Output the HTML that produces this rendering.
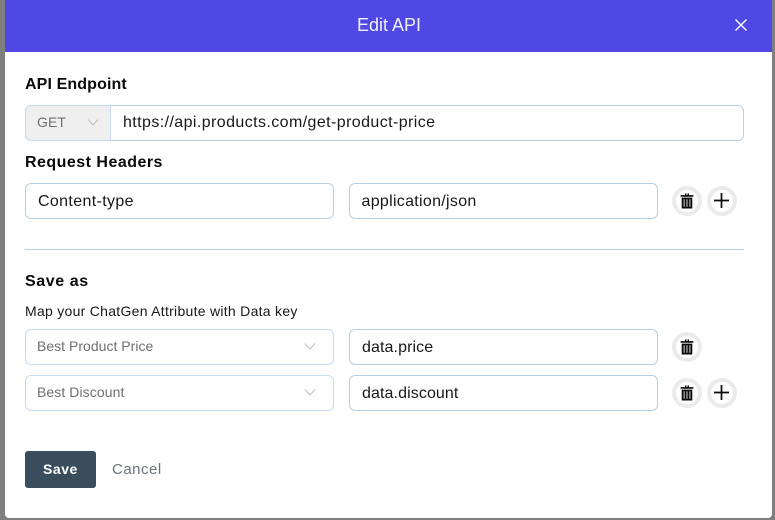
<!DOCTYPE html>
<html><head><meta charset="utf-8"><title>Edit API</title>
<style>
html,body{margin:0;padding:0;width:775px;height:520px;overflow:hidden;background:#7f7f7f}
body{position:relative;font-family:"Liberation Sans",sans-serif;color:#111}
.modal{position:absolute;left:5px;top:0;width:767px;height:518px;background:#fff;border-radius:0 0 4px 4px}
.hd{position:absolute;left:5px;top:0;width:767px;height:52px;background:#5048e5}
.t{position:absolute;white-space:nowrap;line-height:20px}
.b{font-weight:700;font-size:16px;color:#0a0a0a}
.box{position:absolute;box-sizing:border-box;height:36px;background:#fff;border:1px solid #b8d0e4;border-radius:6px}
.sel{border-color:#c9daf3}
.val{font-size:16px;color:#16181c}
.ph{font-size:14px;color:#6f6f6f}
.ic{position:absolute}
.circ{position:absolute;width:30px;height:30px;box-sizing:border-box;border:4px solid #ebebeb;border-radius:50%;background:#fff}
</style></head><body>
<div class="modal"></div>
<div class="hd"></div>
<div class="t" style="left:357px;top:15px;font-size:18px;color:#f2f1ff">Edit API</div>
<svg class="ic" style="left:735px;top:19px" width="12" height="12" viewBox="0 0 12 12"><path d="M.5 .5L11.500 11.500M11.500 .5L.5 11.500" stroke="#fff" stroke-width="1.400" fill="none"/></svg>

<div class="t b" style="left:25px;top:75px;letter-spacing:.12px">API Endpoint</div>
<div class="box" style="left:25px;top:105px;width:719px"></div>
<div style="position:absolute;left:25px;top:105px;width:86px;height:36px;box-sizing:border-box;background:#efefef;border:1px solid #c9daf3;border-radius:6px 0 0 6px"></div>
<div class="t ph" style="left:37px;top:112px;letter-spacing:.1px">GET</div>
<svg class="ic" style="left:87px;top:118px" width="12" height="9" viewBox="0 0 12 9"><path d="M1 1.500L6 7L11 1.500" stroke="#c4c4c4" stroke-width="1.100" fill="none"/></svg>
<div class="t val" style="left:123px;top:113px;letter-spacing:.41px">https://api.products.com/get-product-price</div>

<div class="t b" style="left:25px;top:153px;letter-spacing:.48px">Request Headers</div>
<div class="box" style="left:25px;top:183px;width:309px"></div>
<div class="t val" style="left:38px;top:192px;letter-spacing:.36px">Content-type</div>
<div class="box" style="left:349px;top:183px;width:309px"></div>
<div class="t val" style="left:361.500px;top:192px;letter-spacing:.3px">application/json</div>

<div class="circ" style="left:672px;top:186px"></div>
<svg class="ic" style="left:680px;top:193px" width="14" height="16" viewBox="0 0 14 16"><path d="M5 .5h4v1.600h4.400v1.600H.6V2.100H5zM1.700 4.600h10.600v10.900H1.700z" fill="#0a0a0a"/><path d="M4.100 6.300v7.500M7 6.300v7.500M9.900 6.300v7.500" stroke="#d8d8d8" stroke-width="1" fill="none"/><path d="M6 1.200h2" stroke="#fff" stroke-width=".8"/></svg>
<div class="circ" style="left:707px;top:186px"></div>
<svg class="ic" style="left:714px;top:193px" width="15" height="15" viewBox="0 0 15 15"><path d="M7.500 0v15M0 7.500h15" stroke="#0a0a0a" stroke-width="1.700" fill="none"/></svg>

<div style="position:absolute;left:25px;top:249px;width:719px;height:1px;background:#b8d0e4"></div>

<div class="t b" style="left:25px;top:272px;letter-spacing:.58px">Save as</div>
<div class="t" style="left:25px;top:301px;font-size:14px;color:#16181c;letter-spacing:.28px">Map your ChatGen Attribute with Data key</div>

<div class="box sel" style="left:25px;top:329px;width:309px"></div>
<div class="t ph" style="left:37px;top:336px;letter-spacing:.02px">Best Product Price</div>
<svg class="ic" style="left:304px;top:342px" width="12" height="9" viewBox="0 0 12 9"><path d="M1 1.500L6 7L11 1.500" stroke="#c4c4c4" stroke-width="1.100" fill="none"/></svg>
<div class="box" style="left:349px;top:329px;width:309px"></div>
<div class="t val" style="left:362px;top:338px;letter-spacing:.1px">data.price</div>
<div class="circ" style="left:672px;top:332px"></div>
<svg class="ic" style="left:680px;top:339px" width="14" height="16" viewBox="0 0 14 16"><path d="M5 .5h4v1.600h4.400v1.600H.6V2.100H5zM1.700 4.600h10.600v10.900H1.700z" fill="#0a0a0a"/><path d="M4.100 6.300v7.500M7 6.300v7.500M9.900 6.300v7.500" stroke="#d8d8d8" stroke-width="1" fill="none"/><path d="M6 1.200h2" stroke="#fff" stroke-width=".8"/></svg>

<div class="box sel" style="left:25px;top:375px;width:309px"></div>
<div class="t ph" style="left:37px;top:382px;letter-spacing:.08px">Best Discount</div>
<svg class="ic" style="left:304px;top:388px" width="12" height="9" viewBox="0 0 12 9"><path d="M1 1.500L6 7L11 1.500" stroke="#c4c4c4" stroke-width="1.100" fill="none"/></svg>
<div class="box" style="left:349px;top:375px;width:309px"></div>
<div class="t val" style="left:362px;top:384px;letter-spacing:.1px">data.discount</div>
<div class="circ" style="left:672px;top:378px"></div>
<svg class="ic" style="left:680px;top:385px" width="14" height="16" viewBox="0 0 14 16"><path d="M5 .5h4v1.600h4.400v1.600H.6V2.100H5zM1.700 4.600h10.600v10.900H1.700z" fill="#0a0a0a"/><path d="M4.100 6.300v7.500M7 6.300v7.500M9.900 6.300v7.500" stroke="#d8d8d8" stroke-width="1" fill="none"/><path d="M6 1.200h2" stroke="#fff" stroke-width=".8"/></svg>
<div class="circ" style="left:707px;top:378px"></div>
<svg class="ic" style="left:714px;top:385px" width="15" height="15" viewBox="0 0 15 15"><path d="M7.500 0v15M0 7.500h15" stroke="#0a0a0a" stroke-width="1.700" fill="none"/></svg>

<div style="position:absolute;left:25px;top:451px;width:71px;height:37px;background:#3a4d5c;border-radius:3px"></div>
<div class="t" style="left:43px;top:459px;font-size:14px;font-weight:700;color:#fff;letter-spacing:.55px">Save</div>
<div class="t" style="left:112px;top:460px;font-size:15px;color:#6b737b;letter-spacing:.5px">Cancel</div>
</body></html>
